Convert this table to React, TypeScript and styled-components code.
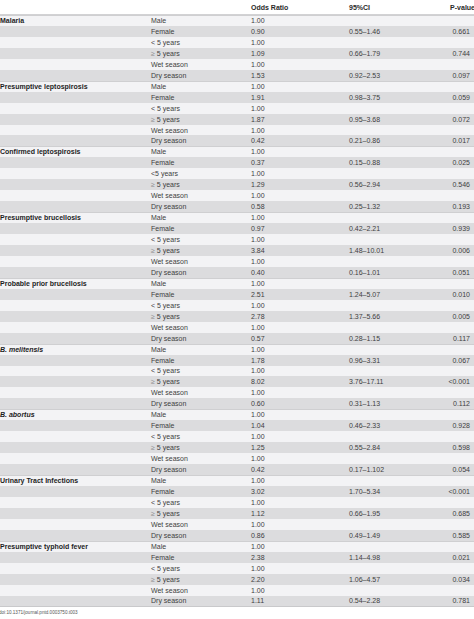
import React from "react";
import styled, { createGlobalStyle } from "styled-components";

const GlobalStyle = createGlobalStyle`
  html, body {
    margin: 0;
    padding: 0;
    background: #ffffff;
  }
  body {
    font-family: "Liberation Sans", Arial, Helvetica, sans-serif;
    color: #3a3a3a;
  }
`;

const columns = "151px 100px 98px 1fr 60px";

const Page = styled.div`
  width: 474px;
  height: 619px;
  overflow: hidden;
  display: flex;
  flex-direction: column;
`;

const TableWrap = styled.div`
  display: flex;
  flex-direction: column;
  border-bottom: 1px solid #c9c9cb;
`;

const HeaderRow = styled.div`
  display: grid;
  grid-template-columns: ${columns};
  height: 14px;
  align-items: center;
  border-bottom: 1px solid #d2d2d4;
  font-size: 7px;
  font-weight: bold;
  color: #2a2a2a;
`;

const HeaderCell = styled.div<{ $right?: boolean }>`
  text-align: ${p => (p.$right ? "right" : "left")};
  white-space: nowrap;
  margin-right: ${p => (p.$right ? "-1px" : "0")};
`;

const Row = styled.div<{ $shade: boolean; $first: boolean }>`
  display: grid;
  grid-template-columns: ${columns};
  height: 10.96px;
  align-items: center;
  font-size: 7px;
  background: ${p => (p.$shade ? "#dcdcde" : "#f3f3f5")};
  box-shadow: ${p => (p.$first ? "inset 0 1px 0 #cfcfd1" : "none")};
  white-space: nowrap;
`;

const GroupName = styled.div<{ $italic?: boolean }>`
  font-weight: bold;
  font-style: ${p => (p.$italic ? "italic" : "normal")};
  color: #1e1e1e;
`;

const Geq = styled.span`
  color: #8a8a8a;
`;

const Cell = styled.div<{ $right?: boolean }>`
  color: #3e3e3e;
  text-align: ${p => (p.$right ? "right" : "left")};
  padding-right: ${p => (p.$right ? "4px" : "0")};
`;

const Footer = styled.div`
  font-size: 4.6px;
  color: #555555;
  padding-top: 3px;
  margin-left: -1px;
  white-space: nowrap;
`;

interface Entry {
  or: string;
  ci?: string;
  p?: string;
}

interface Group {
  name: string;
  italic?: boolean;
  under5?: string;
  rows: Array<Entry>;
}

const ref: Entry = { or: "1.00" };

const groups: Array<Group> = [
  {
    name: "Malaria",
    rows: [
      ref,
      { or: "0.90", ci: "0.55–1.46", p: "0.661" },
      ref,
      { or: "1.09", ci: "0.66–1.79", p: "0.744" },
      ref,
      { or: "1.53", ci: "0.92–2.53", p: "0.097" },
    ],
  },
  {
    name: "Presumptive leptospirosis",
    rows: [
      ref,
      { or: "1.91", ci: "0.98–3.75", p: "0.059" },
      ref,
      { or: "1.87", ci: "0.95–3.68", p: "0.072" },
      ref,
      { or: "0.42", ci: "0.21–0.86", p: "0.017" },
    ],
  },
  {
    name: "Confirmed leptospirosis",
    under5: "<5 years",
    rows: [
      ref,
      { or: "0.37", ci: "0.15–0.88", p: "0.025" },
      ref,
      { or: "1.29", ci: "0.56–2.94", p: "0.546" },
      ref,
      { or: "0.58", ci: "0.25–1.32", p: "0.193" },
    ],
  },
  {
    name: "Presumptive brucellosis",
    rows: [
      ref,
      { or: "0.97", ci: "0.42–2.21", p: "0.939" },
      ref,
      { or: "3.84", ci: "1.48–10.01", p: "0.006" },
      ref,
      { or: "0.40", ci: "0.16–1.01", p: "0.051" },
    ],
  },
  {
    name: "Probable prior brucellosis",
    rows: [
      ref,
      { or: "2.51", ci: "1.24–5.07", p: "0.010" },
      ref,
      { or: "2.78", ci: "1.37–5.66", p: "0.005" },
      ref,
      { or: "0.57", ci: "0.28–1.15", p: "0.117" },
    ],
  },
  {
    name: "B. melitensis",
    italic: true,
    rows: [
      ref,
      { or: "1.78", ci: "0.96–3.31", p: "0.067" },
      ref,
      { or: "8.02", ci: "3.76–17.11", p: "<0.001" },
      ref,
      { or: "0.60", ci: "0.31–1.13", p: "0.112" },
    ],
  },
  {
    name: "B. abortus",
    italic: true,
    rows: [
      ref,
      { or: "1.04", ci: "0.46–2.33", p: "0.928" },
      ref,
      { or: "1.25", ci: "0.55–2.84", p: "0.598" },
      ref,
      { or: "0.42", ci: "0.17–1.102", p: "0.054" },
    ],
  },
  {
    name: "Urinary Tract Infections",
    rows: [
      ref,
      { or: "3.02", ci: "1.70–5.34", p: "<0.001" },
      ref,
      { or: "1.12", ci: "0.66–1.95", p: "0.685" },
      ref,
      { or: "0.86", ci: "0.49–1.49", p: "0.585" },
    ],
  },
  {
    name: "Presumptive typhoid fever",
    rows: [
      ref,
      { or: "2.38", ci: "1.14–4.98", p: "0.021" },
      ref,
      { or: "2.20", ci: "1.06–4.57", p: "0.034" },
      ref,
      { or: "1.11", ci: "0.54–2.28", p: "0.781" },
    ],
  },
];

const subLabel = (index: number, under5: string) => {
  switch (index) {
    case 0:
      return "Male";
    case 1:
      return "Female";
    case 2:
      return under5;
    case 3:
      return (
        <>
          <Geq>≥</Geq> 5 years
        </>
      );
    case 4:
      return "Wet season";
    default:
      return "Dry season";
  }
};

const App: React.FC = () => {
  return (
    <Page>
      <GlobalStyle />
      <TableWrap>
        <HeaderRow>
          <HeaderCell />
          <HeaderCell />
          <HeaderCell>Odds Ratio</HeaderCell>
          <HeaderCell>95%CI</HeaderCell>
          <HeaderCell $right>P-value</HeaderCell>
        </HeaderRow>
        {groups.map(group =>
          group.rows.map((entry, i) => (
            <Row key={group.name + i} $shade={i % 2 === 1} $first={i === 0}>
              <GroupName $italic={group.italic}>{i === 0 ? group.name : ""}</GroupName>
              <Cell>{subLabel(i, group.under5 || "< 5 years")}</Cell>
              <Cell>{entry.or}</Cell>
              <Cell>{entry.ci}</Cell>
              <Cell $right>{entry.p}</Cell>
            </Row>
          ))
        )}
      </TableWrap>
      <Footer>doi:10.1371/journal.pntd.0003750.t003</Footer>
    </Page>
  );
};

export default App;
